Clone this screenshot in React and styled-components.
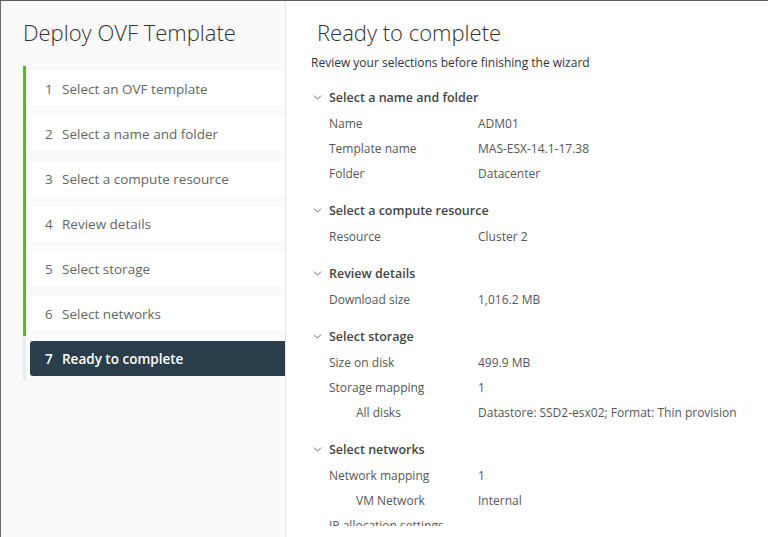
import React from 'react';
import styled, { createGlobalStyle } from 'styled-components';
import { ChevronDown } from 'lucide-react';

const GlobalStyle = createGlobalStyle`
  html, body {
    margin: 0;
    padding: 0;
    background: #fff;
    font-family: "Open Sans", "Liberation Sans", sans-serif;
  }
`;

const Frame = styled.div`
  width: 768px;
  height: 537px;
  box-sizing: border-box;
  border-top: 1px solid #5c5c5c;
  border-left: 1px solid #6a6a6a;
  display: flex;
  overflow: hidden;
  background: #fff;
`;

const Sidebar = styled.div`
  width: 285px;
  flex-shrink: 0;
  background: #fafafa;
  border-right: 1px solid #e6e6e6;
  padding: 15px 0 0 22px;
  box-sizing: border-box;
`;

const WizardTitle = styled.h1`
  margin: 0 0 18px;
  font-size: 22px;
  line-height: 32px;
  font-weight: 300;
  color: #313131;
`;

const StepList = styled.ol`
  list-style: none;
  margin: 0;
  padding: 0;
`;

const StepItem = styled.li`
  padding: 5px 0;
  border-left: 3px solid ${p => (p.done ? '#5eb715' : '#ececec')};
  padding-left: 4px;
`;

const StepBox = styled.div`
  height: 35px;
  display: flex;
  align-items: center;
  padding-left: 15px;
  border-radius: ${p => (p.active ? '3px 0 0 3px' : '0')};
  background: ${p => (p.active ? '#2a3d4a' : '#fff')};
  color: ${p => (p.active ? '#fff' : '#666')};
  font-size: 13.5px;
  font-weight: ${p => (p.active ? 600 : 400)};
`;

const StepNum = styled.span`
  width: 17px;
`;

const Main = styled.div`
  flex: 1;
  display: flex;
  flex-direction: column;
  padding-left: 25px;
`;

const Scroll = styled.div`
  height: 525px;
  overflow: hidden;
`;

const PageTitle = styled.h2`
  margin: 15px 0 0 6px;
  font-size: 22px;
  line-height: 32px;
  font-weight: 300;
  color: #313131;
`;

const Subtitle = styled.p`
  margin: 7px 0 0;
  font-size: 12px;
  line-height: 16px;
  color: #333;
`;

const Section = styled.section`
  margin-top: ${p => (p.first ? '12px' : '10px')};
`;

const SectionHead = styled.div`
  display: flex;
  align-items: center;
  height: 28px;
  color: #454545;
  font-size: 12.5px;
  font-weight: 600;
  gap: 5px;
`;

const Row = styled.div`
  display: flex;
  height: 25px;
  align-items: center;
  font-size: 12px;
  color: #575757;
`;

const Label = styled.div`
  width: ${p => (p.sub ? '122px' : '149px')};
  padding-left: ${p => (p.sub ? '45px' : '18px')};
`;

const Value = styled.div`
  white-space: nowrap;
`;

const steps = [
  'Select an OVF template',
  'Select a name and folder',
  'Select a compute resource',
  'Review details',
  'Select storage',
  'Select networks',
  'Ready to complete',
];

const sections = [
  {
    title: 'Select a name and folder',
    rows: [
      ['Name', 'ADM01'],
      ['Template name', 'MAS-ESX-14.1-17.38'],
      ['Folder', 'Datacenter'],
    ],
  },
  {
    title: 'Select a compute resource',
    rows: [['Resource', 'Cluster 2']],
  },
  {
    title: 'Review details',
    rows: [['Download size', '1,016.2 MB']],
  },
  {
    title: 'Select storage',
    rows: [
      ['Size on disk', '499.9 MB'],
      ['Storage mapping', '1'],
      ['All disks', 'Datastore: SSD2-esx02; Format: Thin provision', true],
    ],
  },
  {
    title: 'Select networks',
    rows: [
      ['Network mapping', '1'],
      ['VM Network', 'Internal', true],
      ['IP allocation settings', ''],
    ],
  },
];

export default function App() {
  return (
    <>
      <GlobalStyle />
      <Frame>
        <Sidebar>
          <WizardTitle>Deploy OVF Template</WizardTitle>
          <StepList>
            {steps.map((s, i) => (
              <StepItem key={i} done={i < 6}>
                <StepBox active={i === 6}>
                  <StepNum>{i + 1}</StepNum>
                  {s}
                </StepBox>
              </StepItem>
            ))}
          </StepList>
        </Sidebar>
        <Main>
          <Scroll>
            <PageTitle>Ready to complete</PageTitle>
            <Subtitle>Review your selections before finishing the wizard</Subtitle>
            {sections.map((sec, i) => (
              <Section key={i} first={i === 0}>
                <SectionHead>
                  <ChevronDown size={13} strokeWidth={1.6} color="#565656" />
                  {sec.title}
                </SectionHead>
                {sec.rows.map(([l, v, sub], j) => (
                  <Row key={j}>
                    <Label sub={sub}>{l}</Label>
                    <Value>{v}</Value>
                  </Row>
                ))}
              </Section>
            ))}
          </Scroll>
        </Main>
      </Frame>
    </>
  );
}
